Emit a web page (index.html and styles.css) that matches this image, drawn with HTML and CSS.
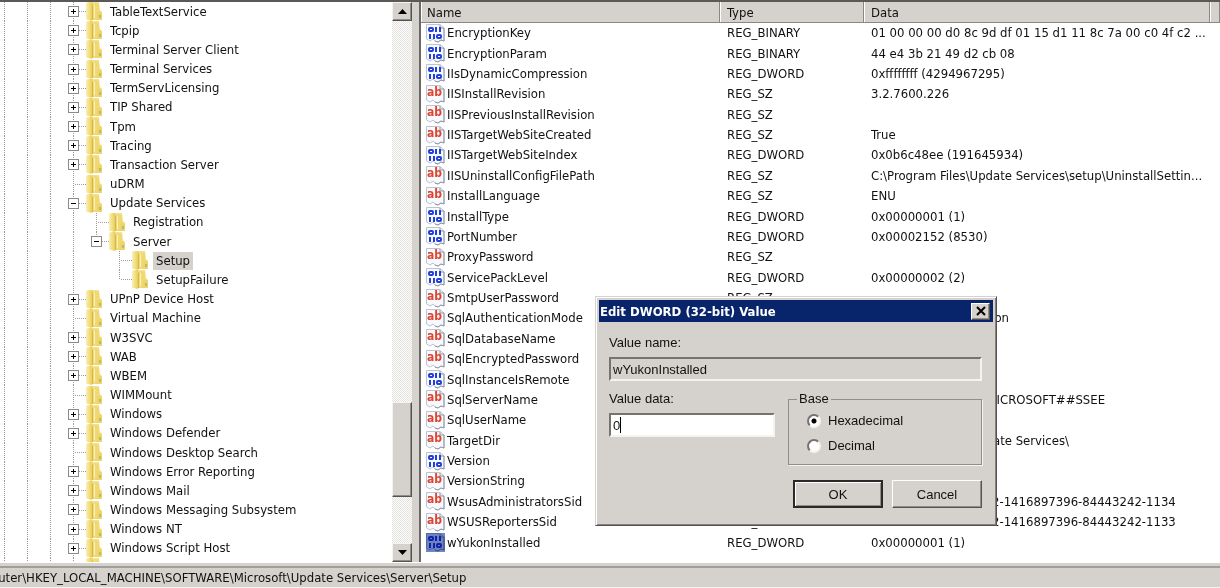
FILE: index.html
```html
<!DOCTYPE html>
<html lang="en">
<head>
  <meta charset="UTF-8">
  <meta name="viewport" content="width=device-width, initial-scale=1.0">
  <title>Registry Editor</title>
  <link rel="stylesheet" href="styles.css">
</head>
<body>
  <svg class="sprites" aria-hidden="true">
    <linearGradient id="leaf" x1="0" x2="1" y1="0" y2="0">
      <stop offset="0" stop-color="#f9f1b4"/>
      <stop offset="0.5" stop-color="#f2dd7c"/>
      <stop offset="1" stop-color="#e5c555"/>
    </linearGradient>
    <symbol id="folder" viewBox="0 0 16 19" preserveAspectRatio="none">
      <path d="M0 1 L3 0 H13 L14 8 L16 10 V18 H2 L0 17 Z" fill="#f3e28c"/>
      <path d="M0 1 L6 0 L7 3 V18 L5 19 L0 17 Z" fill="url(#leaf)"/>
      <path d="M7 3 L9 1 L13 2 V15 L8 18 L7 18 Z" fill="#f0d974"/>
      <path d="M6.500 3 V18" stroke="#d9b64a" fill="none"/>
      <path d="M8.500 3 V16" stroke="#fbf3b8" fill="none"/>
      <path d="M11 11 L14 9 L16 11 V18 H9 L11 16 Z" fill="#edd56c"/>
      <path d="M13 13 H15 V16 H13 Z" fill="#b5bc72"/>
    </symbol>
    <symbol id="page" viewBox="0 0 19 19">
      <path d="M.5 .5 H14 L18 4 V17 L15 16 L12 18 L9 17 L7 15 L4 17 L.5 15 Z" fill="#f8f9fc" stroke="#bcc3d2"/>
      <path d="M14 1 V4 H18 M18 4 V17 L15 16 L12 18 L9 17" fill="none" stroke="#8f96a6"/>
    </symbol>
    <symbol id="binary" viewBox="0 0 19 19">
      <use href="#page"/>
      <g fill="none" stroke="#2340d8" stroke-width="2">
        <rect x="3" y="4" width="4" height="3" rx="1"/>
        <path d="M10 3 V8 M14 3 V8 M4 10 V15 M8 10 V15"/>
        <path d="M9 4 H10 M13 4 H14 M3 11 H4 M7 11 H8" stroke-width="1"/>
        <rect x="11" y="11" width="4" height="3" rx="1"/>
      </g>
    </symbol>
  </svg>

  <main class="panes">
    <section class="tree-pane">
      <ul class="tree" id="tree"></ul>
      <div class="scrollbar">
        <button class="scroll-button" type="button" aria-label="Scroll up"><svg viewBox="0 0 9 5"><path d="M0 5 L4.500 0 L9 5 Z"/></svg></button>
        <div class="track-above"></div>
        <div class="thumb"></div>
        <div class="track-below"></div>
        <button class="scroll-button" type="button" aria-label="Scroll down"><svg viewBox="0 0 9 5"><path d="M0 0 L4.500 5 L9 0 Z"/></svg></button>
      </div>
    </section>
    <section class="value-pane">
      <table class="values">
        <colgroup>
          <col class="col-name"><col class="col-type"><col class="col-data"><col>
        </colgroup>
        <thead>
          <tr><th>Name</th><th>Type</th><th>Data</th><th></th></tr>
        </thead>
        <tbody id="values"></tbody>
      </table>
    </section>
  </main>

  <footer class="status"><span>Computer\HKEY_LOCAL_MACHINE\SOFTWARE\Microsoft\Update Services\Server\Setup</span></footer>

  <form class="dialog" role="dialog" aria-labelledby="dialogTitle">
    <header class="title-bar">
      <h1 id="dialogTitle">Edit DWORD (32-bit) Value</h1>
      <button class="close" type="button" aria-label="Close"><svg viewBox="0 0 10 10"><path d="M1 1 L9 9 M9 1 L1 9"/></svg></button>
    </header>
    <div class="dialog-body">
      <label for="valueName">Value name:</label>
      <input class="field" type="text" id="valueName" value="wYukonInstalled" readonly>
      <div class="columns">
        <div class="data-column">
          <label for="valueData">Value data:</label>
          <input class="field caret" type="text" id="valueData" value="0">
        </div>
        <fieldset class="base">
          <legend>Base</legend>
          <label><input type="radio" name="base" checked>Hexadecimal</label>
          <label><input type="radio" name="base">Decimal</label>
        </fieldset>
      </div>
      <div class="actions">
        <button class="default" type="submit">OK</button>
        <button type="button">Cancel</button>
      </div>
    </div>
  </form>

  <script src="script.js"></script>
</body>
</html>
```
FILE: styles.css
```css
* {
  box-sizing: border-box;
}
body {
  margin: 0;
  height: 100vh;
  display: flex;
  flex-direction: column;
  overflow: hidden;
  background-color: #d5d2cd;
  color: #111;
  font-family: "DejaVu Sans Condensed", "Noto Sans", sans-serif;
  font-size: 13px;
}
.sprites {
  position: absolute;
  width: 0;
  height: 0;
}
.panes {
  flex: 1;
  min-height: 0;
  display: flex;
  gap: 7px;
  border-top: 2px solid #5b5855;
}

/* key tree */
.tree-pane {
  width: 412px;
  flex: none;
  display: flex;
  background-color: #fff;
}
.tree {
  flex: 1;
  margin: 0;
  padding: 0 0 0 4px;
  list-style: none;
  display: flex;
  flex-direction: column;
  overflow: hidden;
}
.tree li {
  flex: 1;
  min-height: 0;
  display: flex;
  align-items: center;
  white-space: nowrap;
}
.tree li.cut {
  flex: 0 0 4px;
  align-items: flex-start;
  overflow: hidden;
}
.guide {
  flex: none;
  align-self: stretch;
  width: 23px;
}
.line {
  background: repeating-linear-gradient(#9a9a9a 0 1px, #fff 1px 2px) left / 1px 100% no-repeat;
}
.line.short {
  width: 13px;
}
.branch {
  position: relative;
  width: 13px;
  background:
    repeating-linear-gradient(#9a9a9a 0 1px, #fff 1px 2px) left top / 1px 100% no-repeat,
    repeating-linear-gradient(90deg, #9a9a9a 0 1px, #fff 1px 2px) left center / 100% 1px no-repeat;
}
.branch.last {
  background-size: 1px 50%, 100% 1px;
}
.box {
  position: absolute;
  left: -5px;
  top: 4px;
  width: 11px;
  height: 11px;
  border: 1px solid #8a8a8a;
  background:
    linear-gradient(#000, #000) center / 5px 1px no-repeat,
    #fff;
}
.box.plus {
  background:
    linear-gradient(#000, #000) center / 5px 1px no-repeat,
    linear-gradient(#000, #000) center / 1px 5px no-repeat,
    #fff;
}
.folder {
  flex: none;
  width: 16px;
  height: 19px;
  margin-right: 5px;
}
.label {
  padding: 0 3px;
  line-height: 18px;
}
.selected {
  background-color: #d5d2cd;
}

.scrollbar {
  width: 20px;
  display: flex;
  flex-direction: column;
  background: repeating-conic-gradient(#fff 0 25%, #e3e1dd 0 50%) 0 0 / 2px 2px;
}
.scroll-button,
.thumb {
  border: 1px solid;
  border-color: #f4f3f1 #55524f #55524f #f4f3f1;
  background-color: #d5d2cd;
  box-shadow: inset -1px -1px #918e8a;
}
.scroll-button {
  height: 19px;
  padding: 0;
  display: flex;
  align-items: center;
  justify-content: center;
}
.scroll-button svg {
  width: 9px;
  height: 5px;
}
.track-above {
  flex: 382;
}
.thumb {
  flex: 94;
}
.track-below {
  flex: 46;
}

/* value list */
.value-pane {
  flex: 1;
  min-width: 0;
  padding-bottom: 9px;
  border-left: 2px solid #6a6764;
  background-color: #fff;
}
.values {
  width: 100%;
  height: 100%;
  table-layout: fixed;
  border-collapse: separate;
  border-spacing: 0;
}
.col-name {
  width: 299px;
}
.col-type {
  width: 144px;
}
.col-data {
  width: 346px;
}
.values th {
  height: 21px;
  padding: 2px 7px 0;
  border-right: 1px solid #8b8884;
  border-bottom: 1px solid #8b8884;
  box-shadow: inset 1px 0 #fff;
  background-color: #d5d2cd;
  font-weight: normal;
  line-height: 18px;
  text-align: left;
}
.values th:first-child {
  padding-left: 6px;
}
.values td {
  padding: 0 0 0 7px;
  line-height: 16px;
  overflow: hidden;
  white-space: nowrap;
  text-overflow: ellipsis;
}
.values td:first-child {
  padding-left: 5px;
}
.name {
  display: flex;
  align-items: center;
  gap: 2px;
  height: 19px;
}
.icon {
  position: relative;
  flex: none;
  width: 19px;
  height: 19px;
}
.icon svg {
  display: block;
  width: 19px;
  height: 19px;
}
.icon b {
  position: absolute;
  left: 1px;
  top: 0;
  color: #dc4632;
  font: bold 12px/15px "DejaVu Sans Condensed", sans-serif;
}
.icon.active {
  background-color: #7186c4;
}
.icon.active svg {
  mix-blend-mode: multiply;
}

.status {
  height: 26px;
  display: flex;
  border-top: 1px solid #fff;
  border-bottom: 1px solid #f4f3f1;
}
.status span {
  flex: 1;
  margin: 3px 0 0 -36px;
  border-top: 2px solid #a19e99;
  line-height: 19px;
  white-space: nowrap;
}

/* edit dialog */
.dialog {
  position: absolute;
  left: 595px;
  top: 296px;
  width: 402px;
  padding: 3px;
  border: 1px solid;
  border-color: #d5d2cd #55524f #55524f #d5d2cd;
  box-shadow: inset 1px 1px #fff, inset -1px -1px #85827e;
  background-color: #d5d2cd;
  font-family: "Liberation Sans", Arial, sans-serif;
  font-size: 13px;
}
.title-bar {
  height: 22px;
  padding: 0 3px 0 1px;
  display: flex;
  align-items: center;
  justify-content: space-between;
  background-color: #08246b;
}
.title-bar h1 {
  margin: 0;
  color: #fff;
  font: bold 13px "DejaVu Sans Condensed", "Noto Sans", sans-serif;
}
.dialog button {
  border: 1px solid;
  border-color: #fff #55524f #55524f #fff;
  box-shadow: inset -1px -1px #918e8a;
  background-color: #d5d2cd;
  color: #111;
  font: inherit;
}
.dialog .close {
  width: 19px;
  height: 17px;
  padding: 0;
  display: flex;
  align-items: center;
  justify-content: center;
}
.close svg {
  width: 10px;
  height: 10px;
  fill: none;
  stroke: #000;
  stroke-width: 2;
}
.dialog-body {
  padding: 13px 11px 14px 10px;
}
.dialog-body label {
  display: block;
  line-height: 16px;
}
.field {
  display: block;
  width: 100%;
  height: 24px;
  margin-top: 6px;
  padding: 0 2px;
  border: 2px solid;
  border-color: #75726f #f4f3f1 #f4f3f1 #75726f;
  background-color: #fff;
  color: #111;
  font: inherit;
  outline: none;
}
.field[readonly] {
  background-color: #d5d2cd;
}
.caret {
  background: linear-gradient(#000, #000) 9px 2px / 1px 16px no-repeat #fff;
}
.columns {
  display: flex;
  justify-content: space-between;
  margin-top: 10px;
}
.data-column {
  width: 166px;
}
.base {
  width: 194px;
  height: 74px;
  margin: 0;
  padding: 6px 18px;
  border: 1px solid #918e8a;
  box-shadow: 1px 1px #f4f3f1;
}
.base legend {
  margin-left: -10px;
  padding: 0 2px;
  line-height: 16px;
}
.base label {
  display: flex;
  align-items: center;
  gap: 7px;
  margin-bottom: 9px;
}
.base input {
  appearance: none;
  width: 14px;
  height: 14px;
  margin: 0;
  border: 2px solid;
  border-color: #75726f #f4f3f1 #f4f3f1 #75726f;
  border-radius: 50%;
  background-color: #fff;
}
.base input:checked {
  background-image: radial-gradient(circle, #000 0 2px, transparent 3px);
}
.actions {
  display: flex;
  justify-content: flex-end;
  gap: 9px;
  margin-top: 15px;
}
.actions button {
  width: 90px;
  height: 28px;
}
.dialog .default {
  border: 2px solid #2b2927;
  box-shadow: inset 1px 1px #fff, inset -1px -1px #918e8a;
}
```
FILE: script.js
```js
// [name, depth, state]; state: "plus", "minus" or "" for keys without subkeys
const keys = [
  ['TableTextService', 0, 'plus'],
  ['Tcpip', 0, 'plus'],
  ['Terminal Server Client', 0, 'plus'],
  ['Terminal Services', 0, 'plus'],
  ['TermServLicensing', 0, 'plus'],
  ['TIP Shared', 0, 'plus'],
  ['Tpm', 0, 'plus'],
  ['Tracing', 0, 'plus'],
  ['Transaction Server', 0, 'plus'],
  ['uDRM', 0, ''],
  ['Update Services', 0, 'minus'],
  ['Registration', 1, ''],
  ['Server', 1, 'minus', 'last'],
  ['Setup', 2, ''],
  ['SetupFailure', 2, '', 'last'],
  ['UPnP Device Host', 0, 'plus'],
  ['Virtual Machine', 0, ''],
  ['W3SVC', 0, 'plus'],
  ['WAB', 0, 'plus'],
  ['WBEM', 0, 'plus'],
  ['WIMMount', 0, ''],
  ['Windows', 0, 'plus'],
  ['Windows Defender', 0, 'plus'],
  ['Windows Desktop Search', 0, ''],
  ['Windows Error Reporting', 0, 'plus'],
  ['Windows Mail', 0, 'plus'],
  ['Windows Messaging Subsystem', 0, 'plus'],
  ['Windows NT', 0, 'plus'],
  ['Windows Script Host', 0, 'plus'],
];

const values = [
  ['EncryptionKey', 'REG_BINARY', '01 00 00 00 d0 8c 9d df 01 15 d1 11 8c 7a 00 c0 4f c2 ...'],
  ['EncryptionParam', 'REG_BINARY', '44 e4 3b 21 49 d2 cb 08'],
  ['IIsDynamicCompression', 'REG_DWORD', '0xffffffff (4294967295)'],
  ['IISInstallRevision', 'REG_SZ', '3.2.7600.226'],
  ['IISPreviousInstallRevision', 'REG_SZ', ''],
  ['IISTargetWebSiteCreated', 'REG_SZ', 'True'],
  ['IISTargetWebSiteIndex', 'REG_DWORD', '0x0b6c48ee (191645934)'],
  ['IISUninstallConfigFilePath', 'REG_SZ', 'C:\\Program Files\\Update Services\\setup\\UninstallSettin...'],
  ['InstallLanguage', 'REG_SZ', 'ENU'],
  ['InstallType', 'REG_DWORD', '0x00000001 (1)'],
  ['PortNumber', 'REG_DWORD', '0x00002152 (8530)'],
  ['ProxyPassword', 'REG_SZ', ''],
  ['ServicePackLevel', 'REG_DWORD', '0x00000002 (2)'],
  ['SmtpUserPassword', 'REG_SZ', ''],
  ['SqlAuthenticationMode', 'REG_SZ', 'WindowsAuthentication'],
  ['SqlDatabaseName', 'REG_SZ', 'SUSDB'],
  ['SqlEncryptedPassword', 'REG_SZ', ''],
  ['SqlInstanceIsRemote', 'REG_DWORD', '0x00000000 (0)'],
  ['SqlServerName', 'REG_SZ', '%computername%\\MICROSOFT##SSEE'],
  ['SqlUserName', 'REG_SZ', ''],
  ['TargetDir', 'REG_SZ', 'C:\\Program Files\\Update Services\\'],
  ['Version', 'REG_DWORD', '0x00000003 (3)'],
  ['VersionString', 'REG_SZ', '3.2.7600.226'],
  ['WsusAdministratorsSid', 'REG_SZ', 'S-1-5-21-3105687222-1416897396-84443242-1134'],
  ['WSUSReportersSid', 'REG_SZ', 'S-1-5-21-3105687222-1416897396-84443242-1133'],
  ['wYukonInstalled', 'REG_DWORD', '0x00000001 (1)'],
];

const folder = '<svg class="folder"><use href="#folder"/></svg>';
const guides = '<span class="guide line"></span>'.repeat(3);
const tree = document.getElementById('tree');

keys.forEach(([name, depth, state, last]) => {
  const li = document.createElement('li');
  const parents = (depth > 0 ? '<span class="guide line"></span>' : '') +
    (depth > 1 ? '<span class="guide"></span>' : '');
  const box = state ? `<span class="box ${state}"></span>` : '';
  li.innerHTML = `${guides}${parents}<span class="guide branch ${last || ''}">${box}</span>${folder}
    <span class="label${name === 'Setup' ? ' selected' : ''}">${name}</span>`;
  tree.appendChild(li);
});

// next key, scrolled mostly out of view
const cut = document.createElement('li');
cut.className = 'cut';
cut.innerHTML = `${guides}<span class="guide line short"></span>${folder}`;
tree.appendChild(cut);

const body = document.getElementById('values');
values.forEach(([name, type, data]) => {
  const text = type === 'REG_SZ';
  const active = name === 'wYukonInstalled' ? ' active' : '';
  const row = document.createElement('tr');
  row.innerHTML = `
    <td><div class="name"><span class="icon${active}"><svg><use href="#${text ? 'page' : 'binary'}"/></svg>${text ? '<b>ab</b>' : ''}</span>${name}</div></td>
    <td>${type}</td>
    <td>${data}</td>
    <td></td>
  `;
  body.appendChild(row);
});
```
